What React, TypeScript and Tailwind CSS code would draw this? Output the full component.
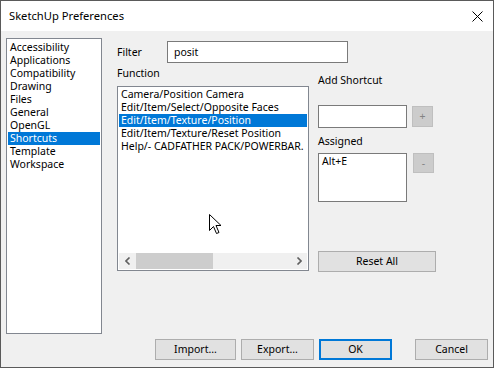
import React from "react";

const categories = [
  "Accessibility",
  "Applications",
  "Compatibility",
  "Drawing",
  "Files",
  "General",
  "OpenGL",
  "Shortcuts",
  "Template",
  "Workspace",
];

const functions = [
  "Camera/Position Camera",
  "Edit/Item/Select/Opposite Faces",
  "Edit/Item/Texture/Position",
  "Edit/Item/Texture/Reset Position",
  "Help/- CADFATHER PACK/POWERBAR.",
];

function Row({ label, selected }: { label: string; selected?: boolean }) {
  return (
    <div
      className={
        "h-[13px] overflow-hidden whitespace-nowrap px-[2px] leading-[13px] " +
        (selected ? "bg-[#0078d7] text-white" : "text-black")
      }
    >
      {label}
    </div>
  );
}

function Button({ label, className = "" }: { label: string; className?: string }) {
  return (
    <div
      className={
        "flex items-center justify-center border border-[#adadad] bg-[#e1e1e1] leading-[13px] text-black " +
        className
      }
    >
      {label}
    </div>
  );
}

function Cursor() {
  return (
    <svg
      className="absolute left-[208px] top-[213px]"
      width="13"
      height="21"
      viewBox="0 0 13 21"
    >
      <path
        d="M0.5 0.5 L0.5 16.5 L4.5 12.5 L7.5 19.5 L10 18.5 L7 11.5 L12 11.5 Z"
        fill="#fff"
        stroke="#000"
        strokeWidth="1"
      />
    </svg>
  );
}

export default function App() {
  return (
    <div
      className="relative flex h-[368px] w-[494px] flex-col border border-[#5a5a5a] bg-[#f0f0f0] text-[10.5px]"
      style={{ fontFamily: '"Noto Sans", "Segoe UI", sans-serif' }}
    >
      {/* title bar */}
      <div className="flex h-[30px] shrink-0 items-center justify-between bg-white pl-[8px] pr-[10px]">
        <span className="text-[11.2px] text-black">SketchUp Preferences</span>
        <svg width="11" height="11" viewBox="0 0 11 11">
          <path d="M0.5 0.5 L10.5 10.5 M10.5 0.5 L0.5 10.5" stroke="#000" strokeWidth="1" />
        </svg>
      </div>

      <div className="flex flex-1 flex-col px-[5px]">
        <div className="flex gap-[15px] pt-[7px]">
          {/* category list */}
          <div className="h-[296px] w-[96px] shrink-0 border border-[#828790] bg-white p-[1px] pt-[2px]">
            {categories.map((c) => (
              <Row key={c} label={c} selected={c === "Shortcuts"} />
            ))}
          </div>

          <div className="flex flex-col">
            <div className="flex items-center pt-[3px]">
              <span className="w-[50px] leading-[13px]">Filter</span>
              <div className="flex h-[22px] w-[181px] items-center border border-[#7a7a7a] bg-white px-[6px] leading-[13px]">
                posit
              </div>
            </div>

            <div className="flex gap-[9px]">
              <div className="flex flex-col">
                <span className="mt-[4px] leading-[13px]">Function</span>
                <div className="mt-[6px] flex h-[185px] w-[192px] flex-col border border-[#828790] bg-white p-[1px]">
                  <div className="flex-1">
                    {functions.map((f) => (
                      <Row key={f} label={f} selected={f === "Edit/Item/Texture/Position"} />
                    ))}
                  </div>
                  <div className="flex h-[16px] items-center bg-[#f0f0f0]">
                    <span className="flex w-[17px] justify-center">
                      <svg width="6" height="8" viewBox="0 0 6 8">
                        <path d="M4.5 0.5 L1 4 L4.5 7.5" fill="none" stroke="#606060" strokeWidth="1.6" />
                      </svg>
                    </span>
                    <div className="h-[16px] w-[77px] bg-[#cdcdcd]" />
                    <div className="flex-1" />
                    <span className="flex w-[17px] justify-center">
                      <svg width="6" height="8" viewBox="0 0 6 8">
                        <path d="M1.5 0.5 L5 4 L1.5 7.5" fill="none" stroke="#606060" strokeWidth="1.6" />
                      </svg>
                    </span>
                  </div>
                </div>
              </div>

              <div className="flex flex-col">
                <span className="mt-[11px] leading-[13px]">Add Shortcut</span>
                <div className="mt-[18px] flex items-center gap-[5px]">
                  <div className="h-[23px] w-[89px] border border-[#7a7a7a] bg-white" />
                  <div className="flex h-[21px] w-[21px] items-center justify-center border border-[#bfbfbf] bg-[#cccccc] leading-[13px] text-[#838383]">
                    +
                  </div>
                </div>
                <span className="mt-[7px] leading-[13px]">Assigned</span>
                <div className="mt-[5px] flex items-start gap-[6px]">
                  <div className="h-[49px] w-[89px] border border-[#7a7a7a] bg-white p-[1px] pl-[3px] leading-[13px]">
                    Alt+E
                  </div>
                  <div className="flex h-[20px] w-[21px] items-center justify-center border border-[#bfbfbf] bg-[#cccccc] leading-[13px] text-[#838383]">
                    -
                  </div>
                </div>
                <Button label="Reset All" className="mt-[49px] h-[21px] w-[118px]" />
              </div>
            </div>
          </div>
        </div>

        <div className="mt-[5px] flex justify-end">
          <Button label="Import..." className="h-[21px] w-[81px]" />
          <Button label="Export..." className="ml-[5px] h-[21px] w-[73px]" />
          <div className="ml-[5px] flex h-[21px] w-[73px] items-center justify-center border-2 border-[#0078d7] bg-[#e1e1e1] leading-[13px]">
            OK
          </div>
          <Button label="Cancel" className="ml-[23px] h-[21px] w-[73px]" />
        </div>
      </div>

      <Cursor />
    </div>
  );
}
